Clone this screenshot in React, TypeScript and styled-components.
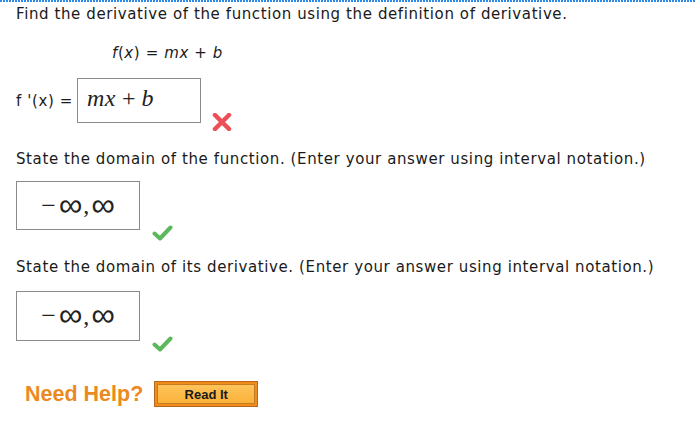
import React from 'react';
import styled, { createGlobalStyle } from 'styled-components';

const GlobalStyle = createGlobalStyle`
  body {
    margin: 0;
    background: #ffffff;
    font-family: 'DejaVu Sans', Verdana, sans-serif;
    color: #1a1a1a;
  }
`;

const Page = styled.div`
  width: 695px;
  height: 428px;
  overflow: hidden;
`;

const TopRule = styled.div`
  height: 2px;
  background: repeating-linear-gradient(90deg, #2d8ae6 0 2px, transparent 2px 3px);
`;

const Content = styled.div`
  padding-left: 16px;
  letter-spacing: 0.6px;
`;

const Prompt = styled.p<{ $top: number }>`
  margin: ${p => p.$top}px 0 0;
  font-size: 15px;
  line-height: 18px;
`;

const Formula = styled.div`
  margin: 21px 0 0 96px;
  font-size: 15px;
  line-height: 18px;
  i {
    font-style: italic;
  }
`;

const AnswerRow = styled.div<{ $top: number }>`
  display: flex;
  align-items: flex-end;
  margin-top: ${p => p.$top}px;
`;

const Label = styled.span`
  align-self: center;
  font-size: 15px;
  margin-right: 4px;
`;

const Box = styled.div<{ $center?: boolean; $h: number }>`
  box-sizing: border-box;
  width: 124px;
  height: ${p => p.$h}px;
  border: 1px solid #8a8a8a;
  display: flex;
  align-items: center;
  justify-content: ${p => (p.$center ? 'center' : 'flex-start')};
  padding-left: ${p => (p.$center ? '0' : '9px')};
  padding-bottom: ${p => (p.$center ? '0' : '4px')};
  font-family: 'Liberation Serif', 'Times New Roman', serif;
  font-size: 24px;
  letter-spacing: 0;
  color: #222;
`;

const MathText = styled.span`
  font-style: italic;
  letter-spacing: 0.5px;
`;

const Minus = styled.span`
  font-size: 26px;
  margin-right: 3px;
`;

const Inf = styled.span`
  font-family: 'DejaVu Sans', sans-serif;
  font-weight: 200;
  font-size: 33px;
  line-height: 24px;
  position: relative;
  top: -1px;
`;

const Comma = styled.span`
  margin: 0 2px 0 1px;
`;

const Mark = styled.span<{ $gap: number; $drop: number }>`
  display: inline-flex;
  margin-left: ${p => p.$gap}px;
  margin-bottom: ${p => -p.$drop}px;
`;

const HelpRow = styled.div`
  display: flex;
  align-items: center;
  margin: 40px 0 0 9px;
  letter-spacing: 0;
`;

const HelpText = styled.span`
  font-family: 'Liberation Sans', Arial, sans-serif;
  font-weight: bold;
  font-size: 21.5px;
  color: #ec8a22;
`;

const ReadIt = styled.button`
  box-sizing: border-box;
  margin-left: 11px;
  width: 104px;
  height: 26px;
  padding: 2px;
  border: 1px solid #b8661a;
  background: #f08c1e;
  cursor: pointer;
  span {
    display: flex;
    align-items: center;
    justify-content: center;
    height: 100%;
    box-sizing: border-box;
    border: 1px solid #c77a20;
    background: linear-gradient(#fdc35a, #fbb23a);
    font-family: 'Liberation Sans', Arial, sans-serif;
    font-weight: bold;
    font-size: 13px;
    color: #1a1a1a;
  }
`;

const WrongIcon = () => (
  <svg width="20" height="18" viewBox="0 0 20 18">
    <path d="M3 2 L17 16 M17 2 L3 16" stroke="#ec4f57" strokeWidth="4.5" strokeLinecap="round" />
  </svg>
);

const RightIcon = () => (
  <svg width="21" height="16" viewBox="0 0 21 16">
    <path d="M2.5 8.5 L8 13.5 L18.5 2.5" fill="none" stroke="#5cb85c" strokeWidth="4" strokeLinecap="round" strokeLinejoin="round" />
  </svg>
);

const Interval = () => (
  <>
    <Minus>−</Minus>
    <Inf>∞</Inf>
    <Comma>,</Comma>
    <Inf>∞</Inf>
  </>
);

export default function App() {
  return (
    <Page>
      <GlobalStyle />
      <TopRule />
      <Content>
        <Prompt $top={3}>Find the derivative of the function using the definition of derivative.</Prompt>
        <Formula>
          <i>f</i>(<i>x</i>) = <i>mx</i> + <i>b</i>
        </Formula>
        <AnswerRow $top={16}>
          <Label>f '(x) =</Label>
          <Box $h={45}>
            <MathText>mx</MathText>&nbsp;+&nbsp;<MathText>b</MathText>
          </Box>
          <Mark $gap={11} $drop={8}><WrongIcon /></Mark>
        </AnswerRow>
        <Prompt $top={27}>State the domain of the function. (Enter your answer using interval notation.)</Prompt>
        <AnswerRow $top={13}>
          <Box $center $h={49}><Interval /></Box>
          <Mark $gap={12} $drop={11}><RightIcon /></Mark>
        </AnswerRow>
        <Prompt $top={28}>State the domain of its derivative. (Enter your answer using interval notation.)</Prompt>
        <AnswerRow $top={15}>
          <Box $center $h={50}><Interval /></Box>
          <Mark $gap={12} $drop={11}><RightIcon /></Mark>
        </AnswerRow>
        <HelpRow>
          <HelpText>Need Help?</HelpText>
          <ReadIt><span>Read It</span></ReadIt>
        </HelpRow>
      </Content>
    </Page>
  );
}
